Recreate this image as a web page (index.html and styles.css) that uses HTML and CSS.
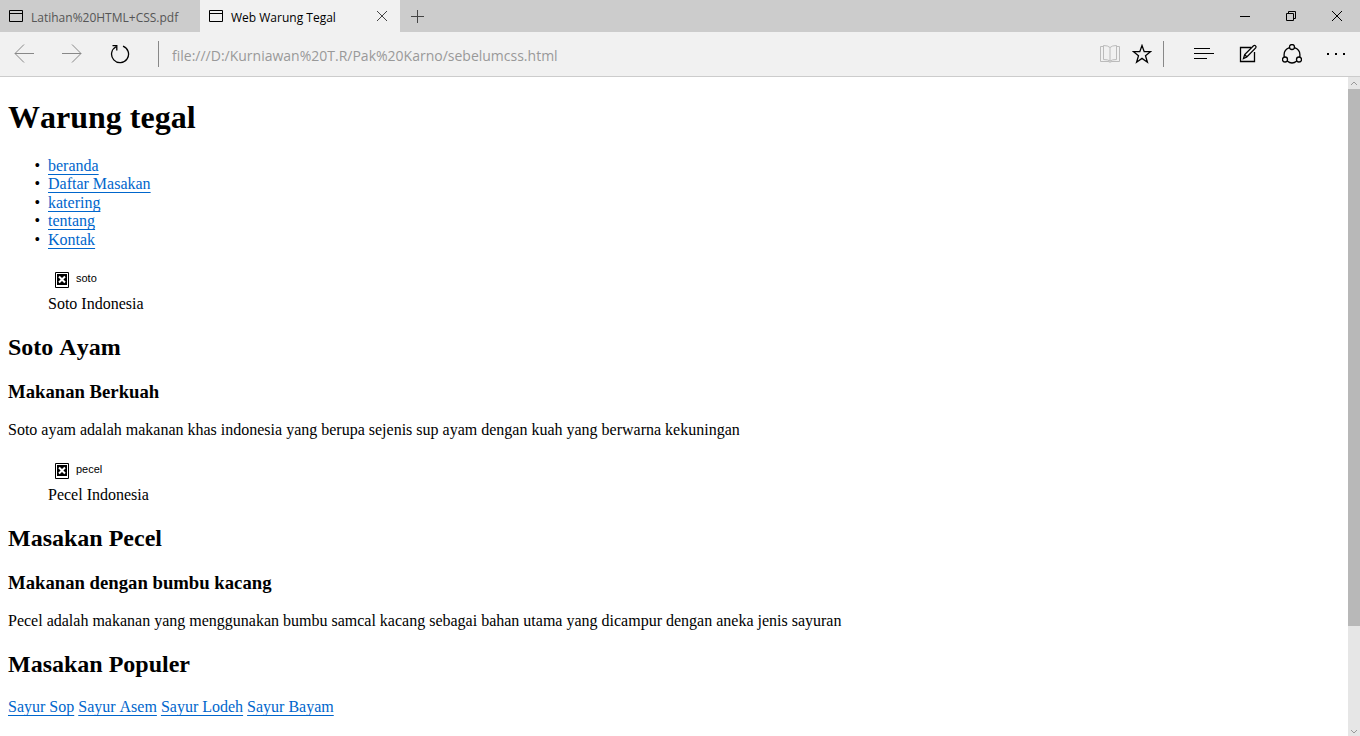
FILE: index.html
```html
<!DOCTYPE html>
<html lang="id">
<head>
  <meta charset="UTF-8">
  <meta name="viewport" content="width=device-width, initial-scale=1.0">
  <title>Web Warung Tegal</title>
  <link rel="stylesheet" href="styles.css">
</head>
<body>
  <header>
    <div class="tabs">
      <button class="tab">
        <svg width="14" height="12" viewBox="0 0 14 12"><path d="M.5.5h13v11H.5zM.5 3.5h13"/></svg>
        <span>Latihan%20HTML+CSS.pdf</span>
      </button>
      <div class="tab active">
        <svg width="14" height="12" viewBox="0 0 14 12"><path d="M.5.5h13v11H.5zM.5 3.5h13"/></svg>
        <span>Web Warung Tegal</span>
        <button class="close" aria-label="Close tab">
          <svg width="10" height="10" viewBox="0 0 10 10"><path d="M0 0l10 10M10 0L0 10"/></svg>
        </button>
      </div>
      <button class="new-tab" aria-label="New tab">
        <svg width="13" height="13" viewBox="0 0 13 13"><path d="M6.5 0v13M0 6.5h13"/></svg>
      </button>
      <div class="window-buttons">
        <button aria-label="Minimize"><svg width="10" height="10" viewBox="0 0 10 10"><path d="M0 5.5h10"/></svg></button>
        <button aria-label="Restore"><svg width="10" height="10" viewBox="0 0 10 10"><path d="M.5 2.5h7v7h-7zM2.5 2.5v-2h7v7h-2"/></svg></button>
        <button aria-label="Close"><svg width="10" height="10" viewBox="0 0 10 10"><path d="M0 0l10 10M10 0L0 10"/></svg></button>
      </div>
    </div>

    <div class="toolbar">
      <div class="nav-buttons">
        <button class="dim" aria-label="Back"><svg width="20" height="20" viewBox="0 0 20 20"><path d="M20 9.500H1M10 .5l-9 9 9 9"/></svg></button>
        <button class="dim" aria-label="Forward"><svg width="20" height="20" viewBox="0 0 20 20"><path d="M0 9.500h19M10 .5l9 9-9 9"/></svg></button>
        <button aria-label="Refresh"><svg class="bold" width="20" height="20" viewBox="0 0 20 20"><path d="M13 2.2A8.5 8.5 0 1 1 6 2.7M2.5 1.7h4.3v4.8"/></svg></button>
      </div>
      <input class="address" type="text" aria-label="Address" value="file:///D:/Kurniawan%20T.R/Pak%20Karno/sebelumcss.html">
      <div class="page-buttons">
        <button class="faint" aria-label="Reading view"><svg width="20" height="20" viewBox="0 0 20 20"><path d="M3.500 2.500H.5v15h7.500q2 0 2 1 0-1 2-1h7.500v-15h-3M10 3.500q-2-2-6.500-2v14q4.500 0 6.500 1.500 2-1.500 6.500-1.500v-14q-4.500 0-6.500 2zM10 3.500v14"/></svg></button>
        <button aria-label="Add to favorites"><svg class="bold" width="20" height="20" viewBox="0 0 20 20"><path d="M10 1.500l2.200 6.200h6.300l-5 4 1.900 6.500L10 14.400l-5.400 3.800 1.900-6.500-5-4h6.300z"/></svg></button>
      </div>
      <div class="menu-buttons">
        <button aria-label="Hub"><svg width="20" height="20" viewBox="0 0 20 20"><path d="M0 4.500h16M0 9.500h20M0 14.500h13"/></svg></button>
        <button aria-label="Web note"><svg class="bold" width="20" height="20" viewBox="0 0 20 20"><path d="M13 3.500H2.500v14h14V8"/><path d="M5.500 14.500l1.200-4L15.500 1.700q1.200-.8 2.100.2.900.9.100 2L8.800 13zM6.700 10.500l2.100 2.500"/></svg></button>
        <button aria-label="Share"><svg class="bold" width="20" height="20" viewBox="0 0 20 20"><circle cx="10" cy="3" r="2.500"/><circle cx="3" cy="15.500" r="2.500"/><circle cx="17" cy="15.500" r="2.500"/><path d="M7.500 3.700Q1 6 2.300 13M12.500 3.700Q19 6 17.700 13M5.200 17Q10 21 14.800 17"/></svg></button>
        <button aria-label="More"><svg class="dots" width="20" height="20" viewBox="0 0 20 20"><path d="M1 9h2v2H1zM9 9h2v2H9zM17 9h2v2h-2z"/></svg></button>
      </div>
    </div>
  </header>

  <div class="view">
    <main>
      <h1>Warung tegal</h1>
      <ul>
        <li><a href="#">beranda</a></li>
        <li><a href="#">Daftar Masakan</a></li>
        <li><a href="#">katering</a></li>
        <li><a href="#">tentang</a></li>
        <li><a href="#">Kontak</a></li>
      </ul>

      <figure>
        <div class="missing">
          <svg width="14" height="16" viewBox="0 0 14 16"><path d="M.5.5h13v15H.5z"/><path class="fill" d="M2 2h10v11H2z"/><path class="cross" d="M4 4.500l6 6M10 4.500l-6 6"/></svg>
          <span>soto</span>
        </div>
        <figcaption>Soto Indonesia</figcaption>
      </figure>
      <h2>Soto Ayam</h2>
      <h3>Makanan Berkuah</h3>
      <p>Soto ayam adalah makanan khas indonesia yang berupa sejenis sup ayam dengan kuah yang berwarna kekuningan</p>

      <figure>
        <div class="missing">
          <svg width="14" height="16" viewBox="0 0 14 16"><path d="M.5.5h13v15H.5z"/><path class="fill" d="M2 2h10v11H2z"/><path class="cross" d="M4 4.500l6 6M10 4.500l-6 6"/></svg>
          <span>pecel</span>
        </div>
        <figcaption>Pecel Indonesia</figcaption>
      </figure>
      <h2>Masakan Pecel</h2>
      <h3>Makanan dengan bumbu kacang</h3>
      <p>Pecel adalah makanan yang menggunakan bumbu samcal kacang sebagai bahan utama yang dicampur dengan aneka jenis sayuran</p>

      <h2>Masakan Populer</h2>
      <p>
        <a href="#">Sayur Sop</a>
        <a href="#">Sayur Asem</a>
        <a href="#">Sayur Lodeh</a>
        <a href="#">Sayur Bayam</a>
      </p>
    </main>
    <div class="scrollbar">
      <svg width="12" height="12" viewBox="0 0 12 12"><path d="M3 8l3-3 3 3"/></svg>
      <div class="track"><div class="thumb"></div></div>
      <svg width="12" height="12" viewBox="0 0 12 12"><path d="M3 6l3 3 3-3"/></svg>
    </div>
  </div>
</body>
</html>
```
FILE: styles.css
```css
* {
  box-sizing: border-box;
}
body {
  margin: 0;
  height: 100vh;
  display: flex;
  flex-direction: column;
  overflow: hidden;
  background: #fff;
  color: #000;
  font-family: "Liberation Serif", serif;
  font-size: 16px;
  line-height: 18px;
}
svg {
  display: block;
  flex: none;
  fill: none;
  stroke: #000;
}
button {
  display: flex;
  align-items: center;
  justify-content: center;
  padding: 0;
  border: none;
  background: none;
  color: inherit;
  font: inherit;
}

/* tab strip */
.tabs {
  display: flex;
  height: 32px;
  background: #ccc;
  font-family: "Open Sans", sans-serif;
  font-size: 12px;
}
.tab {
  display: flex;
  align-items: center;
  justify-content: flex-start;
  gap: 8px;
  width: 200px;
  padding: 0 9px;
  color: #555;
}
.tab span {
  padding-top: 3px;
}
.tab.active {
  padding-right: 8px;
  background: #f1f1f1;
  color: #000;
}
.close {
  width: 20px;
  height: 32px;
  margin-left: auto;
}
.close svg,
.new-tab svg {
  stroke: #444;
}
.new-tab {
  width: 34px;
}
.window-buttons {
  display: flex;
  margin-left: auto;
}
.window-buttons button {
  width: 46px;
}

/* toolbar */
.toolbar {
  display: flex;
  align-items: center;
  height: 45px;
  padding-right: 2px;
  background: #f1f1f1;
  border-bottom: 1px solid #ccc;
}
.toolbar svg.bold {
  stroke-width: 1.3;
}
.toolbar svg.dots {
  fill: #000;
  stroke: none;
}
.dim svg {
  stroke: #888;
}
.faint svg {
  stroke: #bbb;
}
.nav-buttons {
  display: flex;
  width: 158px;
}
.nav-buttons button {
  width: 48px;
}
.address {
  flex: 1;
  min-width: 0;
  height: 26px;
  padding: 2px 0 0 13px;
  border: none;
  border-left: 1px solid #888;
  background: none;
  color: #999;
  font-family: "Open Sans", sans-serif;
  font-size: 14px;
}
.page-buttons {
  display: flex;
  align-items: center;
  height: 26px;
  border-right: 1px solid #888;
  padding-right: 5px;
}
.page-buttons button {
  width: 32px;
}
.menu-buttons {
  display: flex;
  padding-left: 18px;
}
.menu-buttons button {
  width: 44px;
}

/* page */
.view {
  flex: 1;
  min-height: 0;
  display: flex;
}
main {
  flex: 1;
  padding: 0 8px;
  overflow: hidden;
  font-kerning: none;
}
a {
  color: #06c;
  text-decoration-skip-ink: none;
  text-decoration-thickness: 1px;
  text-underline-offset: 3px;
}
h1 {
  margin: 22px 0 21px;
  font-size: 32px;
  line-height: 37px;
}
h2 {
  margin: 20px 0;
  font-size: 24px;
  line-height: 28px;
}
h3 {
  margin: 19px 0;
  line-height: 21px;
}
p {
  margin: 16px 0;
}
ul {
  display: grid;
  height: 92px;
  margin: 16px 0 15px;
  padding-left: 40px;
  list-style-type: "•\00a0\00a0";
}
figure {
  margin: 16px 40px;
}
ul + figure {
  margin-top: 15px;
}
.missing {
  display: flex;
  align-items: center;
  gap: 7px;
  height: 31px;
  padding-left: 7px;
  font-family: "Liberation Sans", sans-serif;
  font-size: 11px;
}
.missing span {
  padding-bottom: 3px;
}
.missing .fill {
  fill: #000;
  stroke: none;
}
.missing .cross {
  stroke: #fff;
  stroke-width: 2;
}

/* scrollbar */
.scrollbar {
  display: flex;
  flex-direction: column;
  width: 12px;
  background: #e6e6e6;
}
.scrollbar svg {
  stroke: #999;
}
.track {
  flex: 1;
  display: grid;
  grid-template-rows: 11fr 2fr;
}
.thumb {
  background: #b8b8b8;
}
```
